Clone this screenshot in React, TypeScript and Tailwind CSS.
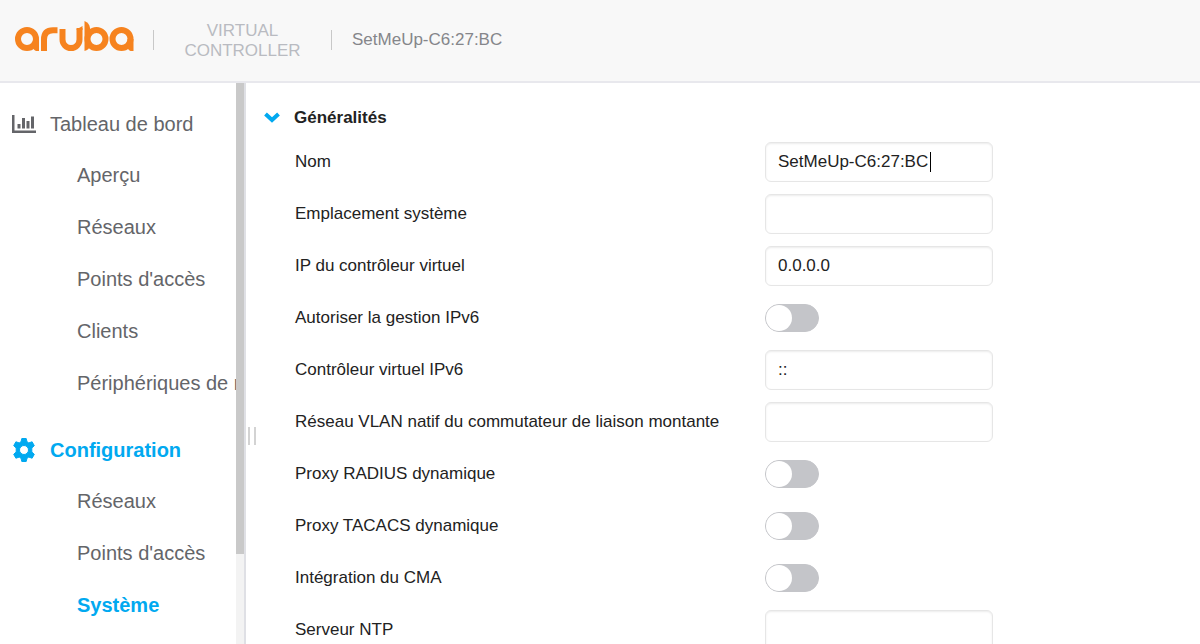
import clsx from 'clsx';

interface NavGroupProps {
  label: string;
  icon: React.ReactNode;
  items: string[];
  active?: boolean;
  current?: string;
}

interface Field {
  id: string;
  label: string;
  type: 'text' | 'switch';
  value?: string;
  focused?: boolean;
}

const fields: Field[] = [
  { id: 'name', label: 'Nom', type: 'text', value: 'SetMeUp-C6:27:BC', focused: true },
  { id: 'location', label: 'Emplacement système', type: 'text' },
  { id: 'vc-ip', label: 'IP du contrôleur virtuel', type: 'text', value: '0.0.0.0' },
  { id: 'ipv6-mgmt', label: 'Autoriser la gestion IPv6', type: 'switch' },
  { id: 'vc-ipv6', label: 'Contrôleur virtuel IPv6', type: 'text', value: '::' },
  { id: 'native-vlan', label: 'Réseau VLAN natif du commutateur de liaison montante', type: 'text' },
  { id: 'radius', label: 'Proxy RADIUS dynamique', type: 'switch' },
  { id: 'tacacs', label: 'Proxy TACACS dynamique', type: 'switch' },
  { id: 'cma', label: 'Intégration du CMA', type: 'switch' },
  { id: 'ntp', label: 'Serveur NTP', type: 'text' },
];

function Logo() {
  return (
    <svg className="h-8 w-30 shrink-0" viewBox="0 0 120 32" role="img" aria-label="aruba">
      <g fill="none" stroke="#f6831f" strokeWidth={6}>
        <circle cx="13" cy="19" r="9" />
        <path d="M30 31V19.500Q30 10.300 39 10.300H43.500" />
        <path d="M48.500 9v10.500a8.500 8.500 0 0 0 17 0V8" />
        <circle cx="82.500" cy="19" r="9" />
        <circle cx="107.500" cy="19" r="9" />
      </g>
      <g fill="#f6831f">
        <path d="M19 19H25V31H22Q19 30 19 26z" />
        <path d="M62.500 9.500L68.500 6V10H62.500z" />
        <path d="M70.500 1Q75.500 3 76 8V26Q75 30 70.500 31z" />
        <path d="M113.500 19H119.500V31H116.500Q113.500 30 113.500 26z" />
      </g>
    </svg>
  );
}

function ChartIcon() {
  return (
    <svg className="h-5 w-6 shrink-0" viewBox="0 0 24 20" fill="#646569">
      <path d="M0 1h2.500v15.500H24V19H0z" />
      <path d="M5.500 10H8.500v4.500h-3zM10 4h3v10.500h-3zM14.500 7h3v7.500h-3zM19 2.500h3v12h-3z" />
    </svg>
  );
}

function GearIcon() {
  return (
    <svg
      className="size-6 shrink-0"
      viewBox="0 0 24 24"
      fill="#01a9f0"
      fillRule="evenodd"
      stroke="#01a9f0"
      strokeLinejoin="round"
    >
      <path d="M9.800.500h4.400l.8 3.300 1.800 1.100 3.300-1.100 2.200 3.900-2.500 2.300v4l2.500 2.300-2.200 3.900-3.300-1.100-1.800 1.100-.8 3.300H9.800L9 20.200l-1.800-1.100-3.300 1.100-2.200-3.900L4.200 14v-4L1.700 7.700l2.200-3.900 3.300 1.100L9 3.800zM12 7.500a4.500 4.500 0 1 0 0 9 4.500 4.500 0 0 0 0-9z" />
    </svg>
  );
}

function NavGroup({ label, icon, items, active, current }: NavGroupProps) {
  return (
    <section>
      <a href="#" className={clsx('flex h-11 items-center gap-3.5 pl-3', active && 'font-bold text-[#01a9f0]')}>
        {icon}
        {label}
      </a>
      <ul className="pt-[3px]">
        {items.map((item) => (
          <li key={item}>
            <a
              href="#"
              className={clsx(
                'flex h-13 items-center whitespace-nowrap pl-[77px]',
                item === current && 'font-bold text-[#01a9f0]',
              )}
            >
              {item}
            </a>
          </li>
        ))}
      </ul>
    </section>
  );
}

function FieldRow({ field }: { field: Field }) {
  return (
    <div className="flex h-13 items-center">
      <label htmlFor={field.id} className="w-[470px] shrink-0">
        {field.label}
      </label>
      {field.type === 'text' ? (
        <div className="relative">
          <input
            id={field.id}
            type="text"
            defaultValue={field.value}
            className="block h-10 w-57 rounded-md border border-[#e6e6e6] bg-white px-3 caret-transparent shadow-[inset_0_1px_2px_#ececec] outline-none"
          />
          {field.focused && <span className="absolute left-[165px] top-2.5 h-5 w-px bg-black" />}
        </div>
      ) : (
        <input
          id={field.id}
          type="checkbox"
          role="switch"
          className="h-7 w-[54px] appearance-none rounded-full border border-[#c4c5c9] bg-[#c4c5c9] before:block before:size-[26px] before:rounded-full before:bg-white checked:bg-[#01a9f0] checked:before:ml-auto"
        />
      )}
    </div>
  );
}

export default function App() {
  return (
    <div className="flex h-screen flex-col overflow-hidden bg-white font-['Liberation_Sans',Arial,sans-serif]">
      <header className="flex h-[83px] shrink-0 items-start border-b-2 border-[#e8e8ed] bg-[#f8f8f8] pl-3.5 pt-5">
        <Logo />
        <div className="ml-[19px] mt-2.5 h-5 w-px bg-[#c8c8c8]" />
        <div className="w-[177px] pt-px text-center text-[17px] leading-5 text-[#b9bbc1]">
          VIRTUAL
          <br />
          CONTROLLER
        </div>
        <div className="mt-2.5 h-5 w-px bg-[#c8c8c8]" />
        <div className="ml-5 mt-2.5 text-[17px] leading-5 text-[#85868a]">SetMeUp-C6:27:BC</div>
      </header>

      <div className="flex min-h-0 flex-1">
        <nav className="w-[236px] shrink-0 overflow-hidden pt-[19px] text-[20px] text-[#646569]">
          <NavGroup
            label="Tableau de bord"
            icon={<ChartIcon />}
            items={['Aperçu', 'Réseaux', "Points d'accès", 'Clients', 'Périphériques de maillage']}
          />
          <div className="h-[19px]" />
          <NavGroup
            label="Configuration"
            icon={<GearIcon />}
            items={['Réseaux', "Points d'accès", 'Système']}
            active
            current="Système"
          />
        </nav>
        <div className="w-2 shrink-0 bg-[#f3f3f3]">
          <div className="h-[84%] bg-[#c9c9c9]" />
        </div>
        <div className="w-0.5 shrink-0 bg-[#dfe0e5]" />
        <div className="flex w-3 shrink-0 items-center justify-center gap-1 pt-36">
          <span className="h-4.5 w-0.5 bg-[#d3d3d3]" />
          <span className="h-4.5 w-0.5 bg-[#d3d3d3]" />
        </div>

        <main className="min-w-0 flex-1 overflow-hidden pl-1.5 pt-[17px] text-[17px] text-[#222222]">
          <h2>
            <button type="button" className="flex h-9 items-center gap-3.5 font-bold">
              <svg className="h-4 w-4" viewBox="0 0 16 16" fill="none" stroke="#01a9f0" strokeWidth={4}>
                <path d="M1.500 4L8 10l6.500-6" />
              </svg>
              Généralités
            </button>
          </h2>
          <form className="pl-[31px]">
            {fields.map((field) => (
              <FieldRow key={field.id} field={field} />
            ))}
          </form>
        </main>
      </div>
    </div>
  );
}
